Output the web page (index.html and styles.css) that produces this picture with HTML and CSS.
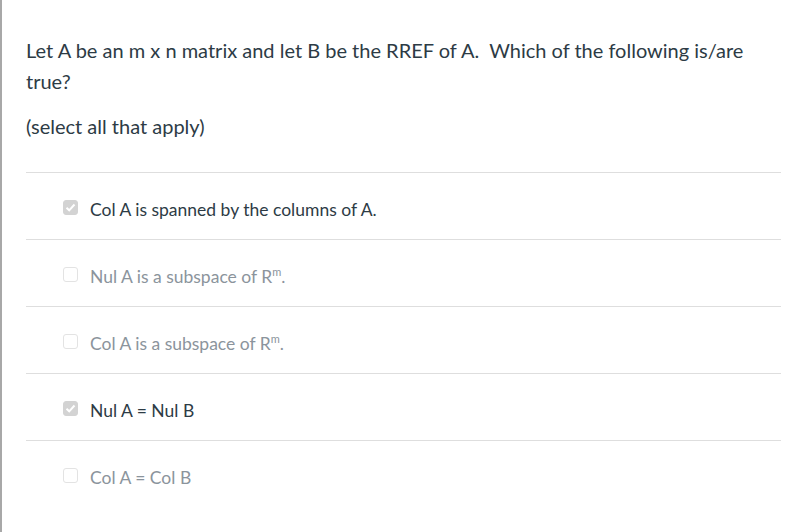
FILE: index.html
```html
<!DOCTYPE html>
<html>
<head>
<meta charset="utf-8">
<link rel="stylesheet" href="styles.css">
</head>
<body>
<div class="page">
  <div class="question">
    <p class="prompt">Let A be an m x n matrix and let B be the RREF of A.&nbsp; Which of the following is/are true?</p>
    <p class="hint">(select all that apply)</p>
  </div>
  <div class="answers">
    <div class="answer checked">
      <span class="box"><svg viewBox="0 0 15 15" width="15" height="15"><path d="M3.5 7.8 L6.2 10.3 L11.5 4.5" fill="none" stroke="#fff" stroke-width="2"/></svg></span>
      <span class="label">Col A is spanned by the columns of A.</span>
    </div>
    <div class="answer">
      <span class="box"></span>
      <span class="label">Nul A is a subspace of R<sup>m</sup>.</span>
    </div>
    <div class="answer">
      <span class="box"></span>
      <span class="label">Col A is a subspace of R<sup>m</sup>.</span>
    </div>
    <div class="answer checked">
      <span class="box"><svg viewBox="0 0 15 15" width="15" height="15"><path d="M3.5 7.8 L6.2 10.3 L11.5 4.5" fill="none" stroke="#fff" stroke-width="2"/></svg></span>
      <span class="label">Nul A = Nul B</span>
    </div>
    <div class="answer">
      <span class="box"></span>
      <span class="label">Col A = Col B</span>
    </div>
  </div>
</div>
</body>
</html>
```

FILE: styles.css
```css
html, body {
  margin: 0;
  padding: 0;
  background: #fff;
}
body {
  font-family: Lato, "Liberation Sans", sans-serif;
  color: #2d3b45;
}
.page {
  border-left: 2px solid #a8a8a8;
  min-height: 532px;
  box-sizing: border-box;
  padding: 0 22px 0 24px;
}
.question {
  padding-top: 35px;
  padding-bottom: 30px;
}
.prompt {
  margin: 0;
  font-size: 20px;
  line-height: 31px;
}
.hint {
  margin: 13px 0 0;
  font-size: 20px;
  line-height: 32px;
}
.answer {
  border-top: 1px solid #dedede;
  display: flex;
  align-items: flex-start;
  gap: 12px;
  padding: 27px 0 19px 37px;
}
.box {
  width: 15px;
  height: 15px;
  box-sizing: border-box;
  border: 1px solid #e3e3e3;
  border-radius: 3px;
  background: #fff;
  flex: none;
  display: flex;
}
.checked .box {
  background: #d3d3d3;
  border-color: #d3d3d3;
}
.checked .box svg {
  margin: -1px;
}
.label {
  font-size: 17.5px;
  line-height: 20px;
  color: #8b949c;
}
.checked .label {
  color: #2d3b45;
}
.label sup {
  font-size: 11px;
  line-height: 0;
}
```
